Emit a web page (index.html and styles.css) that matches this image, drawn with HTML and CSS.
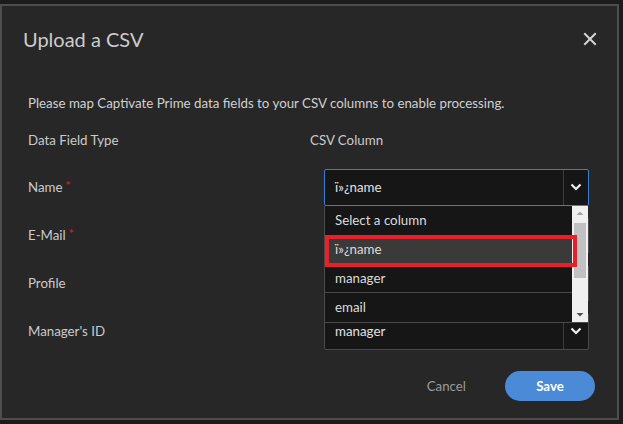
FILE: index.html
```html
<!DOCTYPE html>
<html>
<head>
<meta charset="utf-8">
<link rel="stylesheet" href="styles.css">
</head>
<body>
<div class="dialog">
  <div class="header">
    <h1 class="title">Upload a CSV</h1>
    <button class="close" aria-label="Close">
      <svg width="14" height="14" viewBox="0 0 14 14"><path d="M2 2 L12 12 M12 2 L2 12" stroke="#d4d4d4" stroke-width="2" stroke-linecap="square"/></svg>
    </button>
  </div>
  <p class="desc">Please map Captivate Prime data fields to your CSV columns to enable processing.</p>
  <div class="grid">
    <div class="colhead">Data Field Type</div>
    <div class="colhead">CSV Column</div>

    <div class="label">Name <span class="req">*</span></div>
    <div class="cell"><div class="select active"><span class="val">ï»¿name</span><span class="chev"><svg width="12" height="8" viewBox="0 0 12 8"><path d="M1.5 1.5 L6 6 L10.5 1.5" fill="none" stroke="#f0f0f0" stroke-width="2.2"/></svg></span></div></div>

    <div class="label">E-Mail <span class="req">*</span></div>
    <div class="cell"><div class="select"><span class="val">email</span><span class="chev"><svg width="12" height="8" viewBox="0 0 12 8"><path d="M1.5 1.5 L6 6 L10.5 1.5" fill="none" stroke="#f0f0f0" stroke-width="2.2"/></svg></span></div></div>

    <div class="label">Profile</div>
    <div class="cell"><div class="select"><span class="val">profile</span><span class="chev"><svg width="12" height="8" viewBox="0 0 12 8"><path d="M1.5 1.5 L6 6 L10.5 1.5" fill="none" stroke="#f0f0f0" stroke-width="2.2"/></svg></span></div></div>

    <div class="label">Manager's ID</div>
    <div class="cell"><div class="select"><span class="val">manager</span><span class="chev"><svg width="12" height="8" viewBox="0 0 12 8"><path d="M1.5 1.5 L6 6 L10.5 1.5" fill="none" stroke="#f0f0f0" stroke-width="2.2"/></svg></span></div></div>
  </div>
  <div class="footer">
    <button class="cancel">Cancel</button>
    <button class="save">Save</button>
  </div>

  <div class="menu">
    <div class="options">
      <div class="opt">Select a column</div>
      <div class="opt hl">ï»¿name</div>
      <div class="opt sep">manager</div>
      <div class="opt">email</div>
    </div>
    <div class="scrollbar">
      <svg class="arrow" width="16" height="14" viewBox="0 0 16 14"><path d="M4.5 9 L8 5.5 L11.5 9 Z" fill="#a3a3a3"/></svg>
      <div class="track"><div class="thumb"></div></div>
      <svg class="arrow" width="16" height="14" viewBox="0 0 16 14"><path d="M4.5 5 L8 8.5 L11.5 5 Z" fill="#505050"/></svg>
    </div>
    <div class="mark"></div>
  </div>
</div>
</body>
</html>
```
FILE: styles.css
```css
* { box-sizing: border-box; }
html, body { margin: 0; padding: 0; }
body {
  background: #1c1c1c;
  width: 623px;
  height: 424px;
  overflow: hidden;
  font-family: "Lato", "Open Sans", sans-serif;
  padding-top: 4px;
}
.dialog {
  position: relative;
  width: 619px;
  height: 416px;
  background: #272727;
  border: 2px solid #4e4e4e;
  padding: 0 26px 0 26px;
  display: flex;
  flex-direction: column;
}
.header {
  display: flex;
  align-items: center;
  justify-content: space-between;
  height: 24px;
  margin-top: 21px;
  margin-left: -5px;
  margin-right: -6px;
}
.title {
  margin: 0;
  font-size: 20px;
  font-weight: 400;
  color: #cccccc;
  line-height: 24px;
}
.close {
  background: none;
  border: 0;
  padding: 0;
  width: 14px;
  height: 14px;
  display: flex;
}
.desc {
  margin: 43px 0 0 0;
  font-size: 13.3px;
  line-height: 18px;
  color: #d0d0d0;
}
.grid {
  display: grid;
  grid-template-columns: 282px 1fr;
  grid-template-rows: 32px repeat(4, 48px);
  margin-top: 19px;
}
.colhead {
  font-size: 13.3px;
  line-height: 18px;
  color: #cbcbcb;
}
.label {
  display: flex;
  align-items: center;
  font-size: 13.3px;
  color: #cbcbcb;
}
.req { color: #e02020; font-size: 12px; margin-left: 3px; align-self: flex-start; margin-top: 15px; }
.cell {
  display: flex;
  align-items: center;
  padding-left: 14px;
}
.select {
  width: 265px;
  height: 37px;
  background: #161616;
  border: 1px solid #4a4a4a;
  border-radius: 2px;
  display: flex;
  align-items: center;
}
.select.active { border-color: #3b7dd0; }
.val {
  flex: 1;
  padding-left: 10px;
  font-size: 13.3px;
  color: #e2e2e2;
}
.chev {
  width: 25px;
  height: 100%;
  border-left: 1px solid #3c3c3c;
  display: flex;
  align-items: center;
  justify-content: center;
}
.footer {
  margin-top: 16px;
  display: flex;
  justify-content: flex-end;
  align-items: center;
  margin-right: -4px;
}
.cancel {
  background: none;
  border: 0;
  font-family: inherit;
  font-size: 13.3px;
  color: #9a9a9a;
  padding: 0;
  margin-right: 39px;
}
.save {
  width: 90px;
  height: 30px;
  border-radius: 15px;
  border: 0;
  background: #4a8ad6;
  color: #ffffff;
  font-family: inherit;
  font-weight: 700;
  font-size: 13.3px;
}
.menu {
  position: absolute;
  left: 322px;
  top: 200px;
  width: 264px;
  height: 117px;
  background: #161616;
  display: flex;
  border-left: 1px solid #4a4a4a;
  border-bottom: 1px solid #4a4a4a;
}
.options { flex: 1; display: flex; flex-direction: column; }
.opt {
  height: 29px;
  display: flex;
  align-items: center;
  padding-left: 10px;
  font-size: 13.3px;
  color: #dcdcdc;
  border-bottom: 1px solid transparent;
}
.opt.sep { border-bottom-color: #474747; }
.opt.hl { background: #3a3a3a; }
.scrollbar {
  width: 16px;
  background: #f0f0f0;
  display: flex;
  flex-direction: column;
}
.arrow { display: block; }
.track { flex: 1; padding: 3px 2px; }
.thumb { height: 55px; background: #c1c1c1; }
.mark {
  position: absolute;
  left: 0;
  top: 29px;
  width: 252px;
  height: 32px;
  border: 4px solid #e8202a;
}
```
